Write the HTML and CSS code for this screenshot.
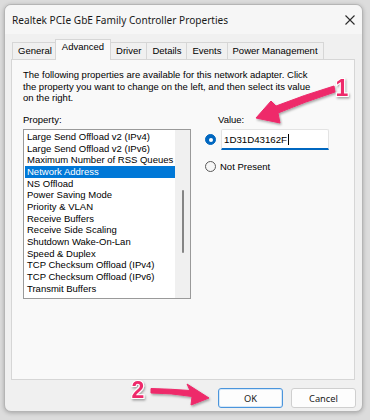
FILE: index.html
```html
<!DOCTYPE html>
<html lang="en">
<head>
<meta charset="utf-8">
<title>Realtek PCIe GbE Family Controller Properties</title>
<link rel="stylesheet" href="styles.css">
</head>
<body>
<div class="window">
  <div class="titlebar">
    <span class="title">Realtek PCIe GbE Family Controller Properties</span>
    <svg class="close" width="10" height="10" viewBox="0 0 10 10"><path d="M0.5 0.5 L9.5 9.5 M9.5 0.5 L0.5 9.5" stroke="#2b2b2b" stroke-width="1.1" fill="none"/></svg>
  </div>
  <div class="tabs">
    <div class="tab">General</div>
    <div class="tab active">Advanced</div>
    <div class="tab">Driver</div>
    <div class="tab">Details</div>
    <div class="tab">Events</div>
    <div class="tab">Power Management</div>
  </div>
  <div class="panel">
    <p class="desc">The following properties are available for this network adapter. Click<br>the property you want to change on the left, and then select its value<br>on the right.</p>
    <div class="cols">
      <div class="prop-col">
        <div class="label">Property:</div>
        <div class="listbox">
          <ul class="items">
            <li>Large Send Offload v2 (IPv4)</li>
            <li>Large Send Offload v2 (IPv6)</li>
            <li>Maximum Number of RSS Queues</li>
            <li class="sel">Network Address</li>
            <li>NS Offload</li>
            <li>Power Saving Mode</li>
            <li>Priority &amp; VLAN</li>
            <li>Receive Buffers</li>
            <li>Receive Side Scaling</li>
            <li>Shutdown Wake-On-Lan</li>
            <li>Speed &amp; Duplex</li>
            <li>TCP Checksum Offload (IPv4)</li>
            <li>TCP Checksum Offload (IPv6)</li>
            <li>Transmit Buffers</li>
          </ul>
          <div class="scrollbar"><div class="thumb"></div></div>
        </div>
      </div>
      <div class="value-col">
        <div class="label value-label">Value:</div>
        <div class="row row-value">
          <span class="radio on"></span>
          <div class="input">1D31D43162F<span class="caret"></span></div>
        </div>
        <div class="row row-np">
          <span class="radio"></span>
          <span>Not Present</span>
        </div>
      </div>
    </div>
  </div>
  <div class="footer">
    <button class="btn primary">OK</button>
    <button class="btn">Cancel</button>
  </div>
</div>
<svg class="annot" width="370" height="420" viewBox="0 0 370 420">
  <defs>
    <filter id="sh" x="-20%" y="-20%" width="140%" height="140%">
      <feDropShadow dx="1" dy="1.5" stdDeviation="1" flood-color="#000" flood-opacity="0.35"/>
    </filter>
  </defs>
  <g filter="url(#sh)" fill="#ee2a6b" stroke="#ee2a6b" stroke-width="1" stroke-linejoin="round">
    <path d="M334 86 Q304 95 276 106 L271 101 L256 118 L280 123 L278 113 Q304 102 335 92 Z"/>
    <path d="M151 388.5 Q171 389 190 390.5 L187 384 L209 398 L191 405 L192 396.5 Q171 393 151 393 Z"/>
  </g>
  <g class="num" filter="url(#sh)">
    <text x="342" y="96" text-anchor="middle">1</text>
    <text x="138" y="398" text-anchor="middle">2</text>
  </g>
</svg>
</body>
</html>
```

FILE: styles.css
```css
html, body {
  margin: 0;
  padding: 0;
}

body {
  width: 370px;
  height: 420px;
  overflow: hidden;
  background: #dcdcdc;
  font-family: "Liberation Sans", Arial, sans-serif;
  font-size: 9.5px;
  color: #000;
}

.window {
  margin: 4px 0 0 4px;
  width: 357px;
  border: 1px solid #b5b5b5;
  border-radius: 7px;
  background: #f0f0f0;
  box-shadow: 0 1px 4px rgba(0, 0, 0, 0.25);
  padding-bottom: 3px;
}

.titlebar {
  height: 29px;
  display: flex;
  align-items: center;
  justify-content: space-between;
  padding: 0 7px 0 7px;
  background: #f6f6f6;
  border-radius: 7px 7px 0 0;
  font-family: "Noto Sans", "Open Sans", sans-serif;
  font-size: 10.1px;
  color: #1a1a1a;
}

.close {
  display: block;
}

.tabs {
  display: flex;
  align-items: flex-end;
  height: 25px;
  padding-left: 7px;
  position: relative;
  z-index: 1;
}

.tab {
  height: 16px;
  line-height: 15px;
  padding: 0 5px;
  border: 1px solid #d6d6d6;
  border-bottom: none;
  background: #f0f0f0;
  margin-right: -1px;
  white-space: nowrap;
}

.tab.active {
  height: 20px;
  line-height: 14px;
  padding: 0 6px;
  margin: 0 -1px -1px -2px;
  background: #f9f9f9;
  position: relative;
  z-index: 2;
}

.panel {
  margin: 0 7px 0 6px;
  height: 321px;
  box-sizing: border-box;
  border: 1px solid #d6d6d6;
  background: #f9f9f9;
  padding: 9px 10px 0 11px;
}

.desc {
  margin: 0;
  line-height: 11.7px;
  white-space: nowrap;
}

.cols {
  display: flex;
  margin-top: 9.5px;
}

.label {
  line-height: 11.7px;
}

.listbox {
  display: flex;
  margin-top: 3.5px;
  width: 168px;
  height: 170px;
  box-sizing: border-box;
  border: 1px solid #9a9a9a;
  background: #fff;
}

.items {
  list-style: none;
  margin: 0;
  padding: 1px 0 0 1px;
  flex: 1;
}

.items li {
  height: 11.7px;
  line-height: 11.7px;
  padding-left: 2px;
  white-space: nowrap;
  overflow: hidden;
}

.items li.sel {
  background: #0078d7;
  color: #fff;
}

.scrollbar {
  width: 15px;
  flex: none;
  background: #f0f0f0;
  display: flex;
  flex-direction: column;
  align-items: center;
  padding-top: 60px;
  box-sizing: border-box;
}

.thumb {
  width: 2px;
  height: 63px;
  border-radius: 1px;
  background: #858585;
}

.value-col {
  margin-left: 14px;
}

.value-label {
  padding-left: 13px;
}

.row {
  display: flex;
  align-items: center;
}

.row-value {
  margin-top: 3.7px;
  gap: 5px;
}

.row-np {
  margin-top: 10px;
  gap: 4px;
  height: 12px;
}

.radio {
  width: 11px;
  height: 11px;
  flex: none;
  box-sizing: border-box;
  border-radius: 50%;
  border: 1px solid #5a5a5a;
  background: #f6f6f6;
}

.radio.on {
  border-color: #0067c0;
  background: #0067c0;
  display: flex;
  align-items: center;
  justify-content: center;
}

.radio.on::after {
  content: "";
  width: 4px;
  height: 4px;
  border-radius: 50%;
  background: #fff;
}

.input {
  width: 108px;
  height: 21px;
  box-sizing: border-box;
  display: flex;
  align-items: center;
  padding-left: 2px;
  background: #fff;
  border: 1px solid #e3e3e3;
  border-bottom: 2px solid #0067c0;
  border-radius: 2px 2px 0 0;
  font-size: 9.7px;
}

.caret {
  width: 1px;
  height: 11px;
  margin-left: 1px;
  background: #000;
}

.footer {
  display: flex;
  justify-content: flex-end;
  gap: 8px;
  margin-top: 8px;
  padding-right: 6px;
}

.btn {
  width: 65px;
  height: 20px;
  box-sizing: border-box;
  margin: 0;
  padding: 0;
  border: 1px solid #cfcfcf;
  border-radius: 3px;
  background: #fdfdfd;
  font-family: "Noto Sans", "Open Sans", sans-serif;
  font-size: 9.3px;
  color: #1a1a1a;
}

.btn.primary {
  border-color: #4b95dc;
  box-shadow: inset 0 0 0 1px #d6e8f8;
}

.annot {
  position: absolute;
  left: 0;
  top: 0;
  pointer-events: none;
}

.num text {
  font-family: "Liberation Sans", Arial, sans-serif;
  font-weight: bold;
  font-size: 23px;
  fill: #ee2a6b;
  stroke: #fff;
  stroke-width: 2px;
  paint-order: stroke;
}
```
